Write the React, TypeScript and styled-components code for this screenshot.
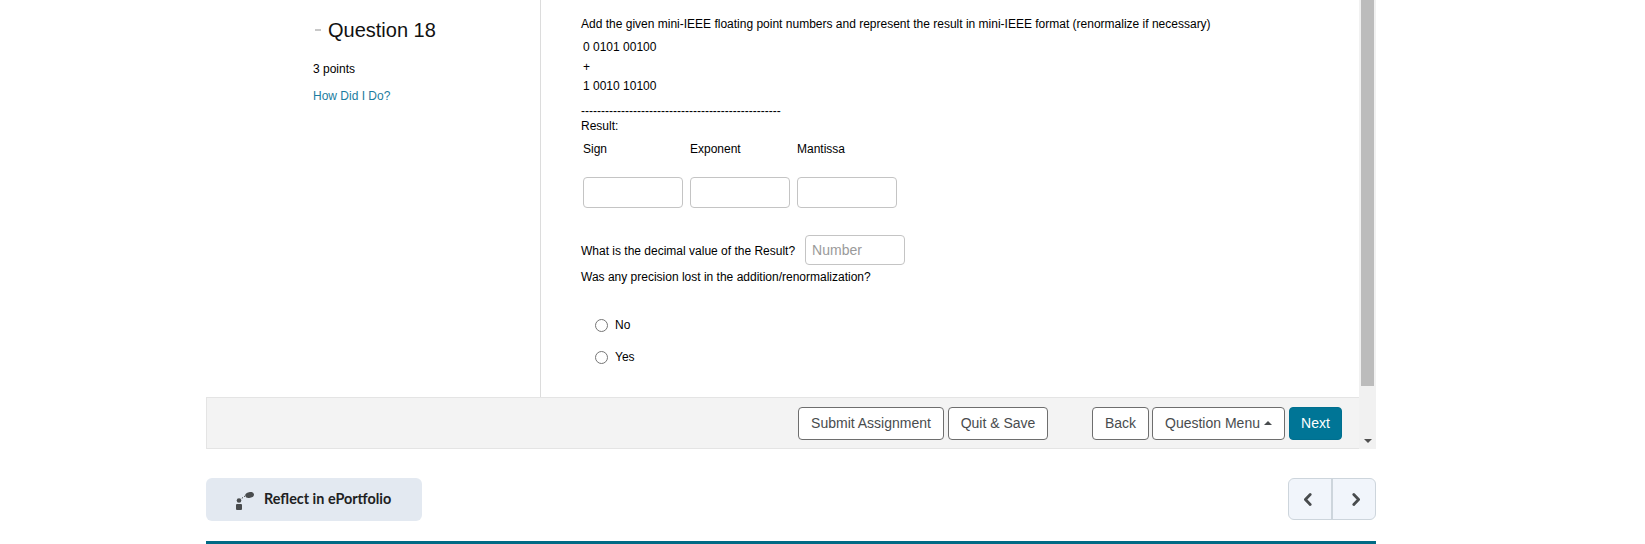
import React from "react";
import styled, { createGlobalStyle } from "styled-components";

const GlobalStyle = createGlobalStyle`
  html, body {
    margin: 0;
    padding: 0;
    height: 544px;
    overflow: hidden;
    background: #ffffff;
  }
  * {
    box-sizing: border-box;
  }
`;

const App: React.FC = () => {
  return (
    <Page>
      <GlobalStyle />
      <Frame>
        <FrameMain>
          <QuestionBody>
            <Sidebar>
              <QuestionTitle>
                <Dash />
                Question 18
              </QuestionTitle>
              <Points>3 points</Points>
              <HowLink href="#">How Did I Do?</HowLink>
            </Sidebar>
            <Content>
              <Prompt>
                Add the given mini-IEEE floating point numbers and represent the
                result in mini-IEEE format (renormalize if necessary)
              </Prompt>
              <Operands>
                <span>0 0101 00100</span>
                <span>+</span>
                <span>1 0010 10100</span>
              </Operands>
              <Rule>--------------------------------------------------</Rule>
              <Prompt>Result:</Prompt>
              <FieldGrid>
                <FieldLabel>Sign</FieldLabel>
                <FieldLabel>Exponent</FieldLabel>
                <FieldLabel>Mantissa</FieldLabel>
                <TextBox aria-label="Sign" />
                <TextBox aria-label="Exponent" />
                <TextBox aria-label="Mantissa" />
              </FieldGrid>
              <DecimalRow>
                <DecimalLabel>What is the decimal value of the Result?</DecimalLabel>
                <NumberBox placeholder="Number" aria-label="Number" />
              </DecimalRow>
              <PrecisionText>
                Was any precision lost in the addition/renormalization?
              </PrecisionText>
              <RadioList>
                <RadioRow>
                  <Radio type="radio" name="lost" />
                  No
                </RadioRow>
                <RadioRow>
                  <Radio type="radio" name="lost" />
                  Yes
                </RadioRow>
              </RadioList>
            </Content>
          </QuestionBody>
          <Footer>
            <FooterGroup>
              <Button $width={146}>Submit Assignment</Button>
              <Button $width={100}>Quit &amp; Save</Button>
            </FooterGroup>
            <FooterGroup>
              <Button $width={57}>Back</Button>
              <MenuButton $width={133}>
                Question Menu
                <Caret />
              </MenuButton>
              <Button $width={53} $primary>
                Next
              </Button>
            </FooterGroup>
          </Footer>
        </FrameMain>
        <Scrollbar>
          <ScrollThumb />
          <ScrollArrow />
        </Scrollbar>
      </Frame>
      <ActionRow>
        <ReflectButton>
          <ReflectIcon width="18" height="18" viewBox="0 0 18 18" fill="#494c4e">
            <ellipse cx="13.6" cy="3" rx="4.4" ry="2.9" transform="rotate(-12 13.6 3)" />
            <circle cx="3" cy="8.5" r="2.3" />
            <rect x="0" y="12" width="6" height="6" rx="1" />
            <path d="M5.8 6.4l1.2-1M8 4.7l1-.7" stroke="#494c4e" strokeWidth="1" />
          </ReflectIcon>
          <ReflectLabel>Reflect in ePortfolio</ReflectLabel>
        </ReflectButton>
        <Pager>
          <PagerButton aria-label="Previous">
            <svg width="9" height="13" viewBox="0 0 9 13" fill="none">
              <path d="M7.2 1.6L2.4 6.5l4.8 4.9" stroke="#494c4e" strokeWidth="2.8" strokeLinecap="round" strokeLinejoin="round" />
            </svg>
          </PagerButton>
          <PagerButton aria-label="Next">
            <svg width="9" height="13" viewBox="0 0 9 13" fill="none">
              <path d="M1.8 1.6l4.8 4.9-4.8 4.9" stroke="#494c4e" strokeWidth="2.8" strokeLinecap="round" strokeLinejoin="round" />
            </svg>
          </PagerButton>
        </Pager>
      </ActionRow>
      <BottomBar />
    </Page>
  );
};

const Page = styled.div`
  width: 1170px;
  height: 544px;
  margin-left: 206px;
  display: flex;
  flex-direction: column;
  font-family: "Liberation Sans", Arial, sans-serif;
  color: #000000;
`;

const Frame = styled.div`
  display: flex;
  height: 449px;
  flex: none;
`;

const FrameMain = styled.div`
  flex: 1;
  display: flex;
  flex-direction: column;
  min-width: 0;
`;

const QuestionBody = styled.div`
  flex: 1;
  display: flex;
  min-height: 0;
`;

const Sidebar = styled.div`
  width: 335px;
  flex: none;
  border-right: 1px solid #dcdcdc;
  padding: 16px 0 0 107px;
  display: flex;
  flex-direction: column;
  align-items: flex-start;
`;

const QuestionTitle = styled.h2`
  margin: 0;
  font-size: 20px;
  font-weight: 400;
  line-height: 28px;
  color: #111111;
  display: flex;
  align-items: center;
`;

const Dash = styled.span`
  width: 6px;
  height: 2px;
  margin: 0 7px 0 2px;
  background: #c8c8c8;
`;

const Points = styled.div`
  margin-top: 16px;
  font-size: 12px;
  line-height: 18px;
`;

const HowLink = styled.a`
  margin-top: 9px;
  font-size: 12px;
  line-height: 18px;
  color: #1c7ca0;
  text-decoration: none;
`;

const Content = styled.div`
  flex: 1;
  padding: 15px 0 0 40px;
  font-size: 12px;
  line-height: 18px;
`;

const Prompt = styled.div`
  line-height: 18px;
`;

const Operands = styled.div`
  margin: 5px 0 0 2px;
  display: flex;
  flex-direction: column;
  gap: 1.5px;
`;

const Rule = styled.div`
  margin-top: 11px;
  line-height: 11px;
  white-space: nowrap;
`;

const FieldGrid = styled.div`
  margin: 5px 0 0 2px;
  display: grid;
  grid-template-columns: repeat(3, 100px);
  column-gap: 7px;
  row-gap: 19px;
`;

const FieldLabel = styled.div`
  line-height: 18px;
`;

const TextBox = styled.input`
  width: 100px;
  height: 31px;
  padding: 0 7px;
  border: 1px solid #c4c4c4;
  border-radius: 4px;
  background: #ffffff;
  outline: none;
`;

const DecimalRow = styled.div`
  margin-top: 27px;
  display: flex;
  align-items: center;
  gap: 10px;
  height: 30px;
`;

const DecimalLabel = styled.span`
  margin-top: 2px;
`;

const NumberBox = styled.input`
  width: 100px;
  height: 30px;
  padding: 0 6px;
  border: 1px solid #c4c4c4;
  border-radius: 4px;
  background: #ffffff;
  font-family: "Liberation Sans", Arial, sans-serif;
  font-size: 14px;
  outline: none;

  &::placeholder {
    color: #9a9a9a;
    opacity: 1;
  }
`;

const PrecisionText = styled.div`
  margin-top: 3px;
`;

const RadioList = styled.div`
  margin: 30px 0 0 14px;
  display: flex;
  flex-direction: column;
  gap: 14px;
`;

const RadioRow = styled.label`
  display: flex;
  align-items: center;
  gap: 7px;
  height: 18px;
`;

const Radio = styled.input`
  appearance: none;
  width: 13px;
  height: 13px;
  margin: 0;
  border: 1px solid #767676;
  border-radius: 50%;
  background: #ffffff;
`;

const Footer = styled.div`
  height: 52px;
  flex: none;
  padding-right: 17px;
  border: 1px solid #e4e4e4;
  border-right: 0;
  background: #f3f3f3;
  display: flex;
  align-items: center;
  justify-content: flex-end;
  gap: 44px;
`;

const FooterGroup = styled.div`
  display: flex;
  gap: 4px;
`;

const Button = styled.button<{ $width: number; $primary?: boolean }>`
  width: ${({ $width }) => $width}px;
  height: 33px;
  padding: 0;
  border: 1px solid ${({ $primary }) => ($primary ? "#006f8f" : "#6e6e6e")};
  border-radius: 4px;
  background: ${({ $primary }) => ($primary ? "#007596" : "#ffffff")};
  color: ${({ $primary }) => ($primary ? "#ffffff" : "#494c4e")};
  font-family: "Liberation Sans", Arial, sans-serif;
  font-size: 14px;
  font-weight: 400;
  display: flex;
  align-items: center;
  justify-content: center;
`;

const MenuButton = styled(Button)`
  margin-left: -1px;
`;

const Caret = styled.span`
  margin-left: 4px;
  width: 0;
  height: 0;
  border-left: 4px solid transparent;
  border-right: 4px solid transparent;
  border-bottom: 4px solid #494c4e;
`;

const Scrollbar = styled.div`
  width: 17px;
  flex: none;
  background: #f1f1f1;
  padding-bottom: 6px;
  display: flex;
  flex-direction: column;
  align-items: center;
  justify-content: space-between;
`;

const ScrollThumb = styled.div`
  width: 13px;
  height: 386px;
  background: #bcbcbc;
`;

const ScrollArrow = styled.span`
  width: 0;
  height: 0;
  border-left: 4px solid transparent;
  border-right: 4px solid transparent;
  border-top: 4px solid #505050;
`;

const ActionRow = styled.div`
  margin-top: 29px;
  display: flex;
  justify-content: space-between;
  align-items: flex-start;
`;

const ReflectButton = styled.button`
  width: 216px;
  height: 43px;
  padding: 0 0 0 30px;
  border: 0;
  border-radius: 6px;
  background: #e3e9f1;
  color: #202122;
  font-family: Lato, sans-serif;
  font-size: 14.4px;
  font-weight: 700;
  display: flex;
  align-items: center;
  gap: 10px;
`;

const ReflectIcon = styled.svg`
  margin-top: 3px;
`;

const ReflectLabel = styled.span`
  margin-bottom: 2px;
`;

const Pager = styled.div`
  width: 88px;
  height: 42px;
  display: flex;
  border: 1px solid #cdd5dc;
  border-radius: 6px;
  background: #f1f5fb;
  overflow: hidden;
`;

const PagerButton = styled.button`
  flex: 0 0 42px;
  padding: 0 6px 0 0;
  border: 0;
  background: transparent;
  display: flex;
  align-items: center;
  justify-content: center;

  & + & {
    flex: 1;
    padding: 0 0 0 4px;
    border-left: 2px solid #cdd5dc;
  }
`;

const BottomBar = styled.div`
  margin-top: 20px;
  height: 3px;
  flex: none;
  background: #006a85;
`;

export default App;
